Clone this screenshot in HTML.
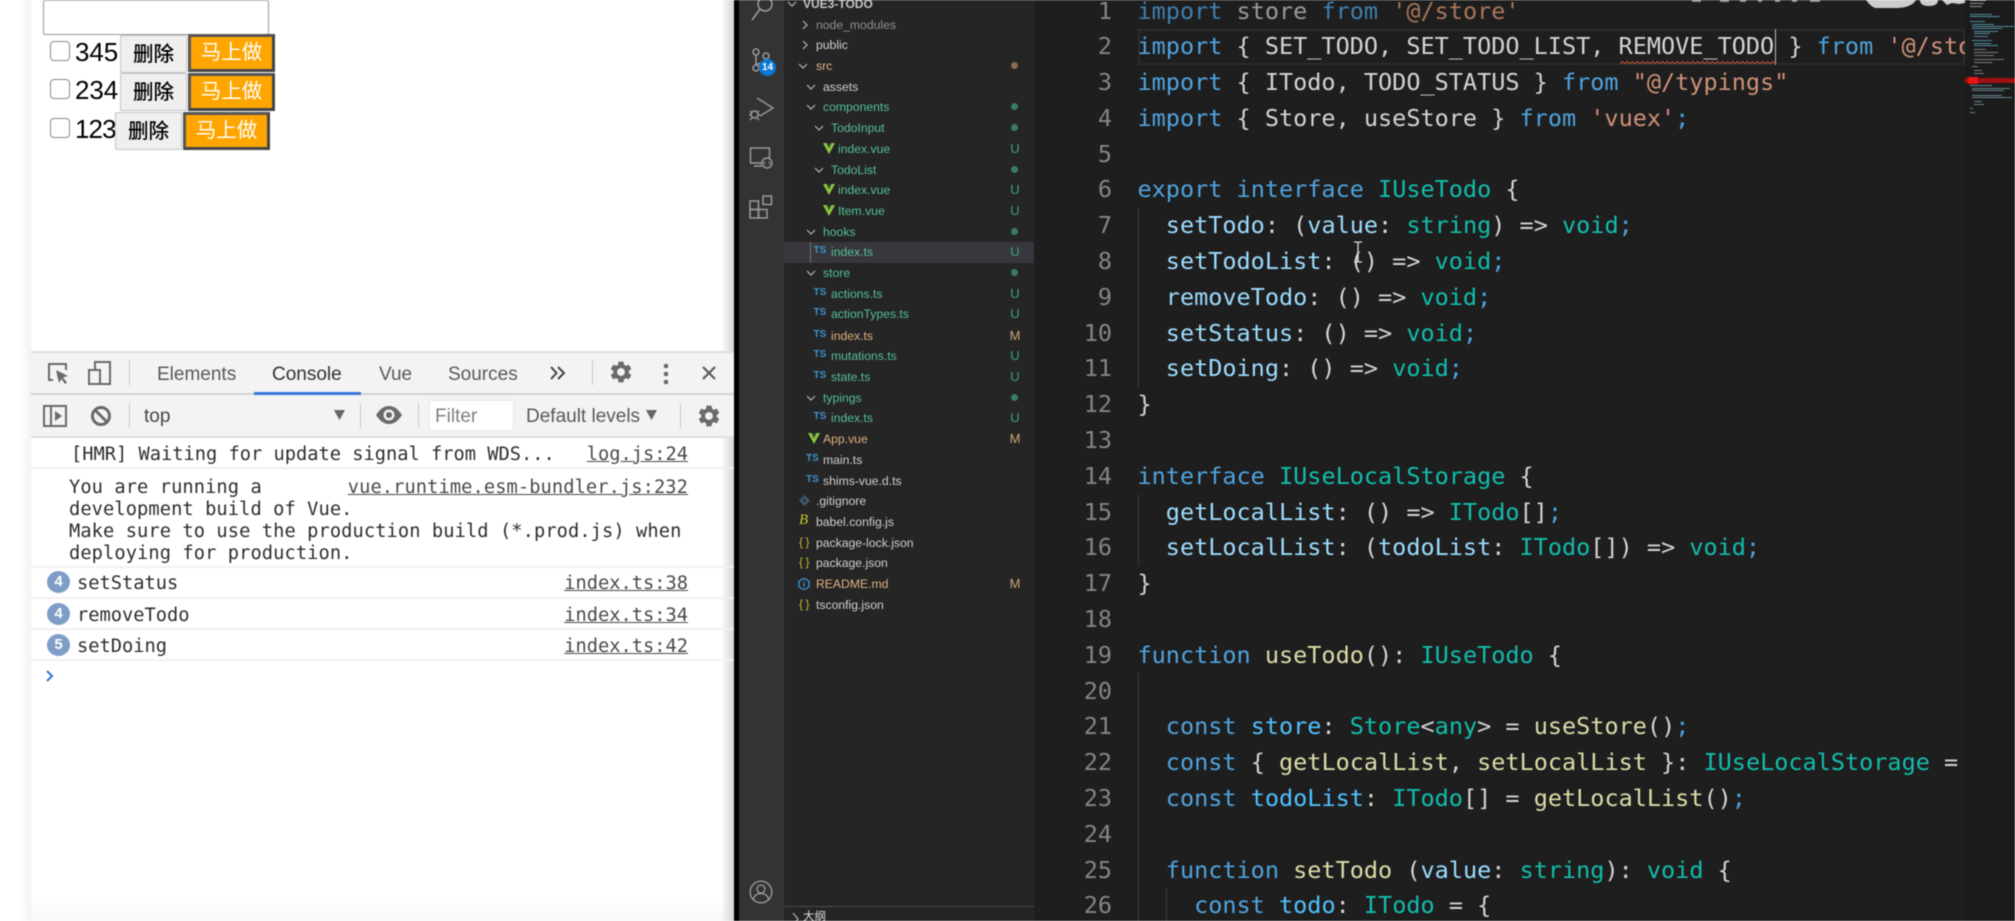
<!DOCTYPE html>
<html lang="zh"><head><meta charset="utf-8"><title>Vue3 Todo</title>
<style>
*{box-sizing:border-box;margin:0;padding:0}
html,body{width:2015px;height:921px;overflow:hidden;background:#fff}
#root{position:absolute;left:0;top:0;width:2015px;height:921px;overflow:hidden;filter:blur(.4px);font-family:"Liberation Sans","Noto Sans CJK SC",sans-serif;background:#fff}
.a{position:absolute}
.t{position:absolute;white-space:pre}
svg{position:absolute;overflow:visible}
/* page */
.btn{position:absolute;height:38px;width:67px;background:#efefef;border:1px solid #c4c4c4;border-radius:2px;font-size:20.5px;line-height:37px;text-align:center;color:#000;font-weight:500}
.ora{position:absolute;height:38px;width:87px;background:#ffa500;border:3px solid #444;border-top-color:#555;border-left-color:#555;font-size:20.5px;line-height:32px;text-align:center;color:#fff}
.cb{position:absolute;left:50px;width:20px;height:20px;border:1px solid #8a8a8a;border-radius:4px;background:#fff}
.num{position:absolute;font-size:26px;line-height:30px;color:#000;letter-spacing:-.1px}
/* devtools */
.tab{position:absolute;top:363.5px;font-size:19px;line-height:22px;color:#5a5a5a;white-space:pre}
.sep{position:absolute;width:1px;background:#c9c9c9}
.hr{position:absolute;left:31px;width:703px;background:#e6e6e6}
.m{position:absolute;font-family:"DejaVu Sans Mono","Liberation Mono",monospace;font-size:18.7px;line-height:22px;color:#2e2e2e;white-space:pre}
.l{text-decoration:underline;color:#4a4a4a;text-align:right;right:1327px}
.bd{position:absolute;left:47px;width:23px;height:22px;border-radius:50%;background:#7f9dc7;color:#fff;font-size:15px;font-weight:bold;line-height:22px;text-align:center}
/* sidebar */
.r{position:absolute;font-size:12.2px;line-height:20px;height:20px;white-space:pre;color:#cfcfcf}
.g{color:#55bf94}.y{color:#e0b27f}.d{color:#8f8f8f}
.ts{position:absolute;font-size:10px;font-weight:bold;line-height:18px;color:#3c94c8}
.st{position:absolute;left:1005px;width:20px;text-align:center;font-size:13px;line-height:20px;color:#3aa27a}
.st.md{color:#cfa673}
.dot{position:absolute;left:1010.5px;width:7px;height:7px;border-radius:50%;background:#3a7d66}
.ch{stroke:#b5b5b5;stroke-width:1.2;fill:none}
/* editor */
pre{font-family:"DejaVu Sans Mono","Liberation Mono",monospace;font-size:23.5px;line-height:35.8px;white-space:pre;margin:0}
.k{color:#4fa3de}.v{color:#9cdcfe}.b{color:#4fc1ff}.n{color:#12bdad}.s{color:#ce9178}.f{color:#dcdcaa}.p{color:#d4d4d4}.i{color:#569cd6}
.gd{position:absolute;width:1px;background:#3a3a3a}
</style></head><body><div id="root">

<!-- left margin & page -->
<div class="a" style="left:20px;top:0;width:11px;height:921px;background:linear-gradient(90deg,#fff,#f3f3f3)"></div>
<div class="a" style="left:31px;top:900px;width:703px;height:21px;background:linear-gradient(180deg,#fff,#f8f8f8)"></div>
<div class="a" style="left:721px;top:0;width:13px;height:921px;background:linear-gradient(90deg,rgba(220,220,220,0),#d4d4d4)"></div>

<div class="a" style="left:43px;top:0;width:226px;height:35px;border:1px solid #999;border-top-color:#aaa;border-radius:2px;background:#fff"></div>

<div class="cb" style="top:41px"></div><div class="num" style="left:75px;top:37px">345</div>
<div class="btn" style="left:120px;top:35px">删除</div><div class="ora" style="left:188px;top:34px">马上做</div>
<div class="cb" style="top:79px"></div><div class="num" style="left:75px;top:75px">234</div>
<div class="btn" style="left:120px;top:73px">删除</div><div class="ora" style="left:188px;top:73px">马上做</div>
<div class="cb" style="top:118px"></div><div class="num" style="left:75px;top:114px;letter-spacing:-.9px">123</div>
<div class="btn" style="left:115px;top:112px">删除</div><div class="ora" style="left:183px;top:112px">马上做</div>

<!-- devtools toolbars -->
<div class="a" style="left:31px;top:352px;width:703px;height:85px;background:#f3f3f3"></div>
<div class="hr" style="top:351px;height:2px;background:#dcdcdc"></div>
<div class="hr" style="top:393px;height:2px;background:#d2d2d2"></div>
<div class="hr" style="top:436px;height:1.5px;background:#dedede"></div>
<div class="a" style="left:254px;top:392px;width:107px;height:3px;background:#3a78d8"></div>

<svg style="left:47px;top:362px" width="22" height="24" viewBox="0 0 22 24" fill="none" stroke="#6a6a6a" stroke-width="2"><path d="M6 18H2V2h17v6"/><path d="M9 8l12 6-5 1.5 4 5-2 1.5-3.500-5L12 21z" fill="#6a6a6a" stroke="none"/></svg>
<svg style="left:87px;top:360px" width="25" height="26" viewBox="0 0 25 26" fill="none" stroke="#6a6a6a" stroke-width="2"><path d="M8 10V2h15v22H2V10h11v14"/></svg>
<div class="sep" style="left:129px;top:360px;height:25px"></div>

<div class="tab" style="left:157px">Elements</div>
<div class="tab" style="left:272px;color:#333">Console</div>
<div class="tab" style="left:379px">Vue</div>
<div class="tab" style="left:448px">Sources</div>
<svg style="left:550px;top:366px" width="16" height="14" viewBox="0 0 16 14" fill="none" stroke="#444" stroke-width="2"><path d="M1 1l5.500 6L1 13M8 1l6 6-6 6"/></svg>
<div class="sep" style="left:592px;top:360px;height:25px"></div>
<svg style="left:608px;top:359px" width="26" height="26" viewBox="0 0 24 24" fill="#6a6a6a"><path id="gear" fill-rule="evenodd" d="M19.14 12.94c.04-.3.06-.61.06-.94 0-.32-.02-.64-.07-.94l2.030-1.580c.18-.14.23-.41.12-.61l-1.920-3.320c-.12-.22-.37-.29-.59-.22l-2.390.96c-.5-.38-1.030-.7-1.620-.94l-.36-2.540c-.04-.24-.24-.41-.48-.41h-3.840c-.24 0-.43.17-.47.41l-.36 2.540c-.59.24-1.130.57-1.620.94l-2.390-.96c-.22-.08-.47 0-.59.22L2.740 8.870c-.12.21-.08.47.12.61l2.030 1.580c-.05.3-.09.63-.09.94s.02.64.07.94l-2.030 1.580c-.18.14-.23.41-.12.61l1.920 3.320c.12.22.37.29.59.22l2.390-.96c.5.38 1.030.7 1.620.94l.36 2.540c.05.24.24.41.48.41h3.840c.24 0 .44-.17.47-.41l.36-2.540c.59-.24 1.130-.56 1.620-.94l2.390.96c.22.08.47 0 .59-.22l1.920-3.320c.12-.22.07-.47-.12-.61l-2.010-1.580zM12 15.6c-1.980 0-3.600-1.620-3.600-3.600s1.620-3.600 3.600-3.600 3.600 1.620 3.600 3.600-1.620 3.600-3.600 3.600z"/></svg>
<svg style="left:663px;top:363px" width="6" height="22" viewBox="0 0 6 22" fill="#6a6a6a"><circle cx="3" cy="3" r="2.300"/><circle cx="3" cy="11" r="2.300"/><circle cx="3" cy="19" r="2.300"/></svg>
<svg style="left:702px;top:366px" width="14" height="14" viewBox="0 0 14 14" stroke="#5a5a5a" stroke-width="2.200"><path d="M1 1l12 12M13 1L1 13"/></svg>

<svg style="left:43px;top:405px" width="25" height="22" viewBox="0 0 25 22" fill="none" stroke="#6a6a6a" stroke-width="2"><rect x="1" y="1" width="22" height="20"/><path d="M8 1v20"/><path d="M12 6l7 5-7 5z" fill="#6a6a6a" stroke="none"/></svg>
<svg style="left:90px;top:405px" width="22" height="22" viewBox="0 0 22 22" fill="none" stroke="#6a6a6a" stroke-width="3"><circle cx="11" cy="11" r="8.500"/><path d="M5 5l12 12"/></svg>
<div class="sep" style="left:129px;top:403px;height:25px"></div>
<div class="tab" style="left:144px;top:406px;color:#444">top</div>
<svg style="left:334px;top:410px" width="11" height="10" viewBox="0 0 11 10" fill="#666"><path d="M0 0h11L5.500 10z"/></svg>
<div class="sep" style="left:360px;top:403px;height:25px"></div>
<svg style="left:376px;top:406px" width="26" height="18" viewBox="0 0 26 18"><path d="M0 9C4 3 8 0 13 0s9 3 13 9c-4 6-8 9-13 9S4 15 0 9z" fill="#6a6a6a"/><circle cx="13" cy="9" r="5.500" fill="#f3f3f3"/><circle cx="13" cy="9" r="3" fill="#6a6a6a"/></svg>
<div class="sep" style="left:418px;top:403px;height:25px"></div>
<div class="a" style="left:429px;top:400px;width:85px;height:31px;background:#fff;border:1px solid #e8e8e8"></div>
<div class="tab" style="left:435px;top:406px;color:#808080">Filter</div>
<div class="tab" style="left:526px;top:406px">Default levels</div>
<svg style="left:646px;top:410px" width="11" height="10" viewBox="0 0 11 10" fill="#666"><path d="M0 0h11L5.500 10z"/></svg>
<div class="sep" style="left:680px;top:403px;height:25px"></div>
<svg style="left:696px;top:403px" width="26" height="26" viewBox="0 0 24 24" fill="#6a6a6a"><use href="#gear"/></svg>

<!-- console -->
<div class="m" style="left:71px;top:443.5px">[HMR] Waiting for update signal from WDS...</div>
<div class="m l" style="top:443.5px">log.js:24</div>
<div class="hr" style="top:467px;height:2px;background:#f0f0f0"></div>
<div class="m" style="left:69px;top:476.5px;letter-spacing:.09px">You are running a
development build of Vue.
Make sure to use the production build (*.prod.js) when
deploying for production.</div>
<div class="m l" style="top:476.5px;letter-spacing:.09px">vue.runtime.esm-bundler.js:232</div>
<div class="hr" style="top:566px;height:2px;background:#f0f0f0"></div>
<div class="bd" style="top:571px">4</div><div class="m" style="left:77px;top:572.5px">setStatus</div><div class="m l" style="top:572.5px">index.ts:38</div>
<div class="hr" style="top:597px;height:2px;background:#f0f0f0"></div>
<div class="bd" style="top:603px">4</div><div class="m" style="left:77px;top:605px">removeTodo</div><div class="m l" style="top:605px">index.ts:34</div>
<div class="hr" style="top:628px;height:2px;background:#f0f0f0"></div>
<div class="bd" style="top:634px">5</div><div class="m" style="left:77px;top:636px">setDoing</div><div class="m l" style="top:636px">index.ts:42</div>
<div class="hr" style="top:659px;height:2px;background:#f2f2f2"></div>
<svg style="left:46px;top:670px" width="8" height="12" viewBox="0 0 8 12" fill="none" stroke="#2f74d8" stroke-width="2"><path d="M1 1l5 5-5 5"/></svg>

<!-- VS Code -->
<div class="a" style="left:734px;top:0;width:5px;height:921px;background:#000"></div>
<div class="a" style="left:739px;top:0;width:45px;height:921px;background:#333"></div>
<div class="a" style="left:784px;top:0;width:250px;height:921px;background:#252526"></div>
<div class="a" style="left:1034px;top:0;width:981px;height:921px;background:#1e1e1e"></div>

<!-- activity icons -->
<svg style="left:750px;top:0" width="24" height="22" viewBox="0 0 24 22" fill="none" stroke="#9c9c9c" stroke-width="1.500"><circle cx="15" cy="4" r="7"/><path d="M10 9L2 20"/></svg>
<svg style="left:752px;top:48px" width="20" height="24" viewBox="0 0 20 24" fill="none" stroke="#9c9c9c" stroke-width="1.500"><circle cx="4" cy="4" r="3"/><circle cx="4" cy="20" r="3"/><circle cx="14" cy="8" r="3"/><path d="M4 7v10M14 11c0 4-7 4-10 6"/></svg>
<div class="a" style="left:759px;top:58.500px;width:17px;height:17px;border-radius:50%;background:#0a78d2;color:#fff;font-size:10px;font-weight:bold;line-height:17px;text-align:center">14</div>
<svg style="left:749px;top:97px" width="26" height="24" viewBox="0 0 26 24" fill="none" stroke="#9c9c9c" stroke-width="1.400"><path d="M8 1l16 10-13 8"/><circle cx="5.500" cy="17.500" r="3.500"/><path d="M1 14l2 2M10 14l-2 2M0 18h2M9 18h2M1 23l2-2M10 23l-2-2"/></svg>
<svg style="left:749px;top:147px" width="26" height="22" viewBox="0 0 26 22" fill="none" stroke="#9c9c9c" stroke-width="1.400"><path d="M13 16H1.500V1h19v10M5 19h8"/><circle cx="18" cy="16" r="5"/><path d="M16 14.500L15 16l1 1.500M20 14.500l1 1.500-1 1.500" stroke-width="1"/></svg>
<svg style="left:749px;top:195px" width="24" height="24" viewBox="0 0 24 24" fill="none" stroke="#9c9c9c" stroke-width="1.500"><rect x="1" y="6" width="8.500" height="8.500"/><rect x="1" y="14.500" width="8.500" height="8.500"/><rect x="9.500" y="14.500" width="8.500" height="8.500"/><rect x="14" y="1" width="8.500" height="8.500"/></svg>
<svg style="left:749px;top:880px" width="24" height="24" viewBox="0 0 24 24" fill="none" stroke="#9c9c9c" stroke-width="1.300"><circle cx="12" cy="12" r="10.800"/><circle cx="12" cy="9" r="4"/><path d="M4.500 19c1-4 4-5.500 7.500-5.500s6.500 1.500 7.500 5.500"/></svg>

<!-- tree -->
<svg style="left:784px;top:0" width="60" height="620" class="ch" fill="none"><g class="ch">
<path d="M4 2l4 4 4-4"/>
<path d="M19 21l4 4-4 4M19 41l4 4-4 4"/>
<path d="M15 64l4 4 4-4"/>
<path d="M23 85l4 4 4-4M23 105l4 4 4-4M31 126l4 4 4-4M31 168l4 4 4-4M23 230l4 4 4-4M23 271l4 4 4-4M23 396l4 4 4-4"/>
</g></svg>

<div class="a" style="left:784px;top:242px;width:250px;height:21px;background:#37373d"></div>
<div class="a" style="left:810px;top:242px;width:1px;height:21px;background:#777"></div>

<div class="r" style="left:803px;top:-6px;font-weight:bold;font-size:12px;color:#c5c5c5">VUE3-TODO</div>
<div class="r d" style="left:816px;top:15px">node_modules</div>
<div class="r" style="left:816px;top:35px">public</div>
<div class="r y" style="left:816px;top:56px">src</div><div class="dot" style="top:62px;background:#8a6d4e"></div>
<div class="r" style="left:823px;top:77px">assets</div>
<div class="r g" style="left:823px;top:97px">components</div><div class="dot" style="top:103px"></div>
<div class="r g" style="left:831px;top:118px">TodoInput</div><div class="dot" style="top:124px"></div>
<div class="r g" style="left:838px;top:139px">index.vue</div><div class="st" style="top:139px">U</div>
<div class="r g" style="left:831px;top:160px">TodoList</div><div class="dot" style="top:166px"></div>
<div class="r g" style="left:838px;top:180px">index.vue</div><div class="st" style="top:180px">U</div>
<div class="r g" style="left:838px;top:201px">Item.vue</div><div class="st" style="top:201px">U</div>
<div class="r g" style="left:823px;top:222px">hooks</div><div class="dot" style="top:228px"></div>
<div class="r g" style="left:831px;top:242px">index.ts</div><div class="st" style="top:242px">U</div>
<div class="r g" style="left:823px;top:263px">store</div><div class="dot" style="top:269px"></div>
<div class="r g" style="left:831px;top:284px">actions.ts</div><div class="st" style="top:284px">U</div>
<div class="r g" style="left:831px;top:304px">actionTypes.ts</div><div class="st" style="top:304px">U</div>
<div class="r y" style="left:831px;top:326px">index.ts</div><div class="st md" style="top:326px">M</div>
<div class="r g" style="left:831px;top:346px">mutations.ts</div><div class="st" style="top:346px">U</div>
<div class="r g" style="left:831px;top:367px">state.ts</div><div class="st" style="top:367px">U</div>
<div class="r g" style="left:823px;top:388px">typings</div><div class="dot" style="top:394px"></div>
<div class="r g" style="left:831px;top:408px">index.ts</div><div class="st" style="top:408px">U</div>
<div class="r y" style="left:823px;top:429px">App.vue</div><div class="st md" style="top:429px">M</div>
<div class="r" style="left:823px;top:450px">main.ts</div>
<div class="r" style="left:823px;top:471px">shims-vue.d.ts</div>
<div class="r" style="left:816px;top:491px">.gitignore</div>
<div class="r" style="left:816px;top:512px">babel.config.js</div>
<div class="r" style="left:816px;top:533px">package-lock.json</div>
<div class="r" style="left:816px;top:553px">package.json</div>
<div class="r y" style="left:816px;top:574px">README.md</div><div class="st md" style="top:574px">M</div>
<div class="r" style="left:816px;top:595px">tsconfig.json</div>

<div class="ts" style="left:813.500px;top:242px">TS</div>
<div class="ts" style="left:813.500px;top:284px">TS</div>
<div class="ts" style="left:813.500px;top:304px">TS</div>
<div class="ts" style="left:813.500px;top:326px">TS</div>
<div class="ts" style="left:813.500px;top:346px">TS</div>
<div class="ts" style="left:813.500px;top:367px">TS</div>
<div class="ts" style="left:813.500px;top:408px">TS</div>
<div class="ts" style="left:806px;top:450px">TS</div>
<div class="ts" style="left:806px;top:471px">TS</div>

<svg width="0" height="0" style="left:0;top:0"><defs><g id="vue"><path d="M0 0h3.500L6 4.500 8.500 0H12L6 11z" fill="#8cc63f"/><path d="M3.500 0h1.800L6 2 6.700 0h1.800L6 5.500z" fill="#2f4a33"/></g></defs></svg>
<svg style="left:823px;top:143px" width="12" height="11"><use href="#vue"/></svg>
<svg style="left:823px;top:184px" width="12" height="11"><use href="#vue"/></svg>
<svg style="left:823px;top:205px" width="12" height="11"><use href="#vue"/></svg>
<svg style="left:808px;top:433px" width="12" height="11"><use href="#vue"/></svg>

<svg style="left:799px;top:495px" width="11" height="11" viewBox="0 0 11 11"><path d="M5.500 0L11 5.500 5.500 11 0 5.500z" fill="#3f5a6e"/><circle cx="5.500" cy="5.500" r="1.500" fill="#252526"/></svg>
<div class="a" style="left:799px;top:510px;font-family:'Liberation Serif',serif;font-style:italic;font-size:15px;line-height:20px;color:#c8c82a">B</div>
<div class="a t" style="left:799px;top:533px;font-size:12px;line-height:18px;color:#c9b52c;letter-spacing:2.500px">{}</div>
<div class="a t" style="left:799px;top:553px;font-size:12px;line-height:18px;color:#c9b52c;letter-spacing:2.500px">{}</div>
<div class="a t" style="left:799px;top:595px;font-size:12px;line-height:18px;color:#c9b52c;letter-spacing:2.500px">{}</div>
<svg style="left:798px;top:578px" width="12" height="12" viewBox="0 0 12 12" fill="none" stroke="#3f9fd8" stroke-width="1.200"><circle cx="6" cy="6" r="5.300"/><path d="M6 5v4M6 3v1"/></svg>

<!-- outline -->
<div class="a" style="left:784px;top:906px;width:250px;height:1px;background:#4a4a4a"></div>
<svg style="left:792px;top:912px" width="8" height="14" viewBox="0 0 8 14" class="ch"><path class="ch" d="M1 1l5 6-5 6"/></svg>
<div class="r" style="left:803px;top:907px;font-size:11.500px;color:#ddd">大纲</div>

<!-- editor -->
<pre class="a" style="left:1060px;top:-6.500px;width:52px;text-align:right;color:#858585">1
2
3
4
5
6
7
8
9
10
11
12
13
14
15
16
17
18
19
20
21
22
23
24
25
26</pre>

<div class="a" style="left:1138px;top:29px;width:827px;height:36px;border:2px solid #2b2b2b"></div>
<div class="gd" style="left:1138px;top:208px;height:179px"></div>
<div class="gd" style="left:1138px;top:494px;height:72px"></div>
<div class="gd" style="left:1138px;top:673px;height:248px"></div>
<div class="gd" style="left:1166px;top:888px;height:33px"></div>

<div class="a" style="left:1137.500px;top:-6.500px;width:827.500px;height:940px;overflow:hidden"><pre><span style="color:#3f7fae">import</span> <span style="color:#9a9a9a">store</span> <span style="color:#3f7fae">from</span> <span style="color:#a8765c">'@/store'</span>
<span class="k">import</span> <span class="p">{ SET_TODO, SET_TODO_LIST, REMOVE_TODO }</span> <span class="k">from</span> <span class="s">'@/store';</span>
<span class="k">import</span> <span class="p">{ ITodo, TODO_STATUS }</span> <span class="k">from</span> <span class="s">"@/typings"</span>
<span class="k">import</span> <span class="p">{ Store, useStore }</span> <span class="k">from</span> <span class="s">'vuex'</span><span class="k">;</span>

<span class="k">export</span> <span class="k">interface</span> <span class="n">IUseTodo</span> <span class="p">{</span>
  <span class="v">setTodo</span><span class="p">: (</span><span class="v">value</span><span class="p">:</span> <span class="n">string</span><span class="p">) =&gt;</span> <span class="n">void</span><span class="k">;</span>
  <span class="v">setTodoList</span><span class="p">: () =&gt;</span> <span class="n">void</span><span class="k">;</span>
  <span class="v">removeTodo</span><span class="p">: () =&gt;</span> <span class="n">void</span><span class="k">;</span>
  <span class="v">setStatus</span><span class="p">: () =&gt;</span> <span class="n">void</span><span class="k">;</span>
  <span class="v">setDoing</span><span class="p">: () =&gt;</span> <span class="n">void</span><span class="k">;</span>
<span class="p">}</span>

<span class="k">interface</span> <span class="n">IUseLocalStorage</span> <span class="p">{</span>
  <span class="v">getLocalList</span><span class="p">: () =&gt;</span> <span class="n">ITodo</span><span class="p">[]</span><span class="k">;</span>
  <span class="v">setLocalList</span><span class="p">: (</span><span class="v">todoList</span><span class="p">:</span> <span class="n">ITodo</span><span class="p">[]) =&gt;</span> <span class="n">void</span><span class="k">;</span>
<span class="p">}</span>

<span class="k">function</span> <span class="f">useTodo</span><span class="p">():</span> <span class="n">IUseTodo</span> <span class="p">{</span>

  <span class="k">const</span> <span class="b">store</span><span class="p">:</span> <span class="n">Store</span><span class="p">&lt;</span><span class="n">any</span><span class="p">&gt; =</span> <span class="f">useStore</span><span class="p">()</span><span class="k">;</span>
  <span class="k">const</span> <span class="p">{</span> <span class="f">getLocalList</span><span class="p">,</span> <span class="f">setLocalList</span> <span class="p">}:</span> <span class="n">IUseLocalStorage</span> <span class="p">=</span>
  <span class="k">const</span> <span class="b">todoList</span><span class="p">:</span> <span class="n">ITodo</span><span class="p">[] =</span> <span class="f">getLocalList</span><span class="p">()</span><span class="k">;</span>

  <span class="k">function</span> <span class="f">setTodo</span> <span class="p">(</span><span class="v">value</span><span class="p">:</span> <span class="n">string</span><span class="p">):</span> <span class="n">void</span> <span class="p">{</span>
    <span class="k">const</span> <span class="b">todo</span><span class="p">:</span> <span class="n">ITodo</span> <span class="p">= {</span></pre></div>

<!-- cursor + squiggle + ibeam -->
<div class="a" style="left:1775px;top:29px;width:1px;height:36px;background:#bbb"></div>
<svg style="left:1620px;top:61px" width="156" height="5"><defs><pattern id="sq" width="5" height="4" patternUnits="userSpaceOnUse"><path d="M0 3L2.500 .5 5 3" fill="none" stroke="#c0563c" stroke-width="1"/></pattern></defs><rect width="156" height="4" fill="url(#sq)"/></svg>
<svg style="left:1352px;top:241px" width="12" height="22" viewBox="0 0 12 22" fill="none" stroke="#ddd" stroke-width="1.300"><path d="M2 1h3l1 1 1-1h3M6 2v18M2 21h3l1-1 1 1h3"/></svg>

<!-- watermark fragments -->
<svg style="left:1680px;top:0" width="285" height="10" viewBox="0 0 285 10"><g fill="#8f8f8f"><rect x="12" y="0" width="9" height="2"/><rect x="40" y="0" width="9" height="2"/><rect x="60" y="0" width="6" height="2"/><rect x="78" y="0" width="4" height="2"/><rect x="95" y="0" width="5" height="2"/><rect x="112" y="0" width="5" height="2"/><rect x="130" y="0" width="10" height="2"/></g><g fill="#cdcdcd"><path d="M186 0h50c-3 5-9 8-22 8h-18c-3 0-7-4-10-8z"/><path d="M240 0h18c0 4-3 6-9 6s-9-2-9-6zM262 0h23v3l-6 1-7-1-5 2z"/></g></svg>

<!-- minimap -->
<div class="a" style="left:1965px;top:0;width:50px;height:921px;background:#1b1b1b"></div>
<div class="a" style="left:1965px;top:78px;width:50px;height:5px;background:#a01010"></div>
<div class="a" style="left:1968px;top:76.500px;width:10px;height:7px;background:#e81515"></div>
<svg style="left:1965px;top:0" width="50" height="120" viewBox="0 0 50 120" opacity=".75">
<g fill="#b9b9b9"><rect x="5" y="0" width="16" height="1"/><rect x="5" y="3" width="14" height="1"/><rect x="5" y="6" width="12" height="1"/></g>
<g fill="#5fb0c8"><rect x="5" y="14" width="22" height="1"/><rect x="5" y="16" width="30" height="1"/><rect x="5" y="21" width="15" height="1"/><rect x="7" y="24" width="22" height="1"/><rect x="7" y="26" width="42" height="1"/><rect x="7" y="28" width="30" height="1"/><rect x="9" y="31" width="24" height="1"/><rect x="9" y="33" width="16" height="1"/><rect x="9" y="36" width="14" height="1"/><rect x="7" y="40" width="20" height="1"/><rect x="9" y="43" width="17" height="1"/><rect x="9" y="45" width="24" height="1"/></g>
<g fill="#9a9a9a"><rect x="9" y="49" width="12" height="1"/><rect x="9" y="52" width="24" height="1"/><rect x="9" y="55" width="20" height="1"/><rect x="9" y="59" width="30" height="1"/><rect x="9" y="62" width="18" height="1"/><rect x="7" y="66" width="6" height="1"/><rect x="9" y="70" width="8" height="1"/><rect x="9" y="73" width="10" height="1"/></g>
<g fill="#7ea9b8"><rect x="5" y="85" width="22" height="1"/><rect x="7" y="88" width="38" height="1"/><rect x="7" y="90" width="32" height="1"/><rect x="7" y="95" width="30" height="1"/><rect x="7" y="97" width="40" height="1"/><rect x="9" y="101" width="8" height="1"/><rect x="9" y="104" width="10" height="1"/><rect x="5" y="108" width="3" height="1"/><rect x="5" y="112" width="5" height="1"/></g>
</svg>

</div></body></html>
